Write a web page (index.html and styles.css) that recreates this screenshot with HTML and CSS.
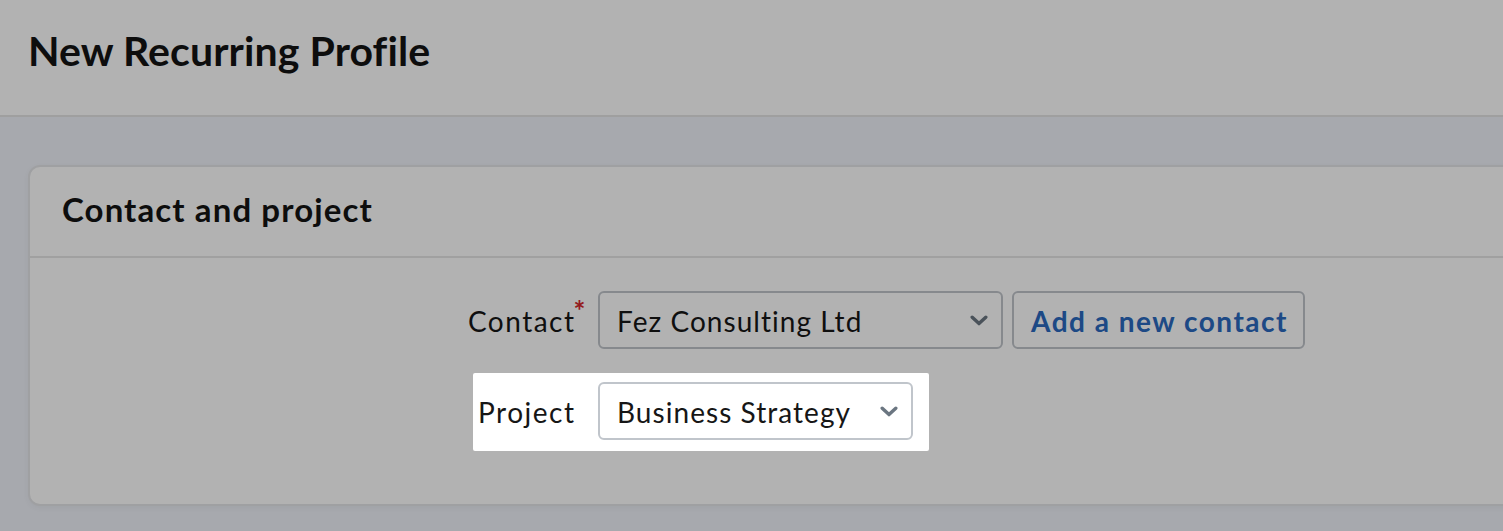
FILE: index.html
```html
<!DOCTYPE html>
<html lang="en">
<head>
<meta charset="utf-8">
<title>New Recurring Profile</title>
<link rel="stylesheet" href="styles.css">
</head>
<body>
<header class="page-header">
  <h1 class="page-title">New Recurring Profile</h1>
</header>
<main class="page-body">
  <section class="card">
    <div class="card-header">
      <h2 class="card-title">Contact and project</h2>
    </div>
    <div class="card-body">
      <div class="form-grid">
        <label class="field-label required">Contact</label>
        <div class="field">
          <div class="select select-wide">
            <span class="select-value">Fez Consulting Ltd</span>
            <svg class="chevron" viewBox="0 0 18 11" width="18" height="11" aria-hidden="true"><path d="M2.2 2.2 L9 8.6 L15.8 2.2" fill="none" stroke="#6b7681" stroke-width="3.4" stroke-linecap="round" stroke-linejoin="round"/></svg>
          </div>
          <button class="btn">Add a new contact</button>
        </div>
        <label class="field-label">Project</label>
        <div class="field">
          <div class="select select-narrow">
            <span class="select-value">Business Strategy</span>
            <svg class="chevron" viewBox="0 0 18 11" width="18" height="11" aria-hidden="true"><path d="M2.2 2.2 L9 8.6 L15.8 2.2" fill="none" stroke="#6b7681" stroke-width="3.4" stroke-linecap="round" stroke-linejoin="round"/></svg>
          </div>
        </div>
      </div>
    </div>
  </section>
</main>
<div class="spotlight"></div>
</body>
</html>
```
FILE: styles.css
```css
* { box-sizing: border-box; }

html, body {
  margin: 0;
  padding: 0;
}

body {
  font-family: "Lato", "Liberation Sans", sans-serif;
  color: #161616;
  background: #eff2f9;
  overflow: hidden;
  height: 531px;
  position: relative;
}

.page-header {
  height: 117px;
  background: #ffffff;
  border-bottom: 2px solid #e4e4e4;
  padding: 26px 0 0 28px;
}

.page-title {
  margin: 0;
  font-size: 41px;
  font-weight: 700;
  line-height: 1.2;
  color: #141414;
  letter-spacing: 0.1px;
}

.page-body {
  padding: 48px 0 0 28px;
  margin-right: -40px;
}

.card {
  background: #ffffff;
  border: 2px solid #e4e5e8;
  border-radius: 12px;
  box-shadow: 0 2px 6px rgba(0, 0, 0, 0.04);
  height: 341px;
}

.card-header {
  padding: 23px 30px 0 32px;
  height: 91px;
  border-bottom: 2px solid #e6e6e6;
}

.card-title {
  margin: 0;
  font-size: 33px;
  font-weight: 700;
  line-height: 1.2;
  letter-spacing: 1.1px;
  color: #141414;
}

.card-body {
  padding-top: 33px;
}

.form-grid {
  display: grid;
  grid-template-columns: 544px 1fr;
  column-gap: 24px;
  row-gap: 33px;
  align-items: center;
}

.field-label {
  justify-self: end;
  font-size: 28px;
  line-height: 1.2;
  letter-spacing: 1.5px;
  margin-right: -1.5px;
  padding-top: 4px;
  position: relative;
}

.field-label.required::after {
  content: "*";
  position: absolute;
  left: 100%;
  top: -5px;
  color: #d4282b;
  font-weight: 700;
  font-size: 28px;
  line-height: 1;
  margin-left: -2px;
}

.field {
  display: flex;
  align-items: center;
  gap: 9px;
}

.select {
  height: 58px;
  border: 2px solid #c0c5cb;
  border-radius: 6px;
  background: #ffffff;
  display: flex;
  align-items: center;
  justify-content: space-between;
  padding: 4px 13px 0 17px;
}

.select-wide { width: 405px; }
.select-narrow { width: 315px; }

.select-value {
  font-size: 28px;
  line-height: 1.2;
  letter-spacing: 1.05px;
  color: #161616;
}

.chevron {
  display: block;
  margin-top: -4px;
}

.btn {
  height: 58px;
  border: 2px solid #c0c5cb;
  border-radius: 6px;
  background: #ffffff;
  padding: 4px 15px 0 17px;
  font-family: "Lato", "Liberation Sans", sans-serif;
  font-size: 28px;
  font-weight: 700;
  line-height: 1.2;
  letter-spacing: 1.5px;
  color: #2a69bf;
}

.spotlight {
  position: absolute;
  left: 473px;
  top: 373px;
  width: 456px;
  height: 78px;
  border-radius: 2px;
  box-shadow: 0 0 0 3000px rgba(0, 0, 0, 0.3);
  pointer-events: none;
}
```
